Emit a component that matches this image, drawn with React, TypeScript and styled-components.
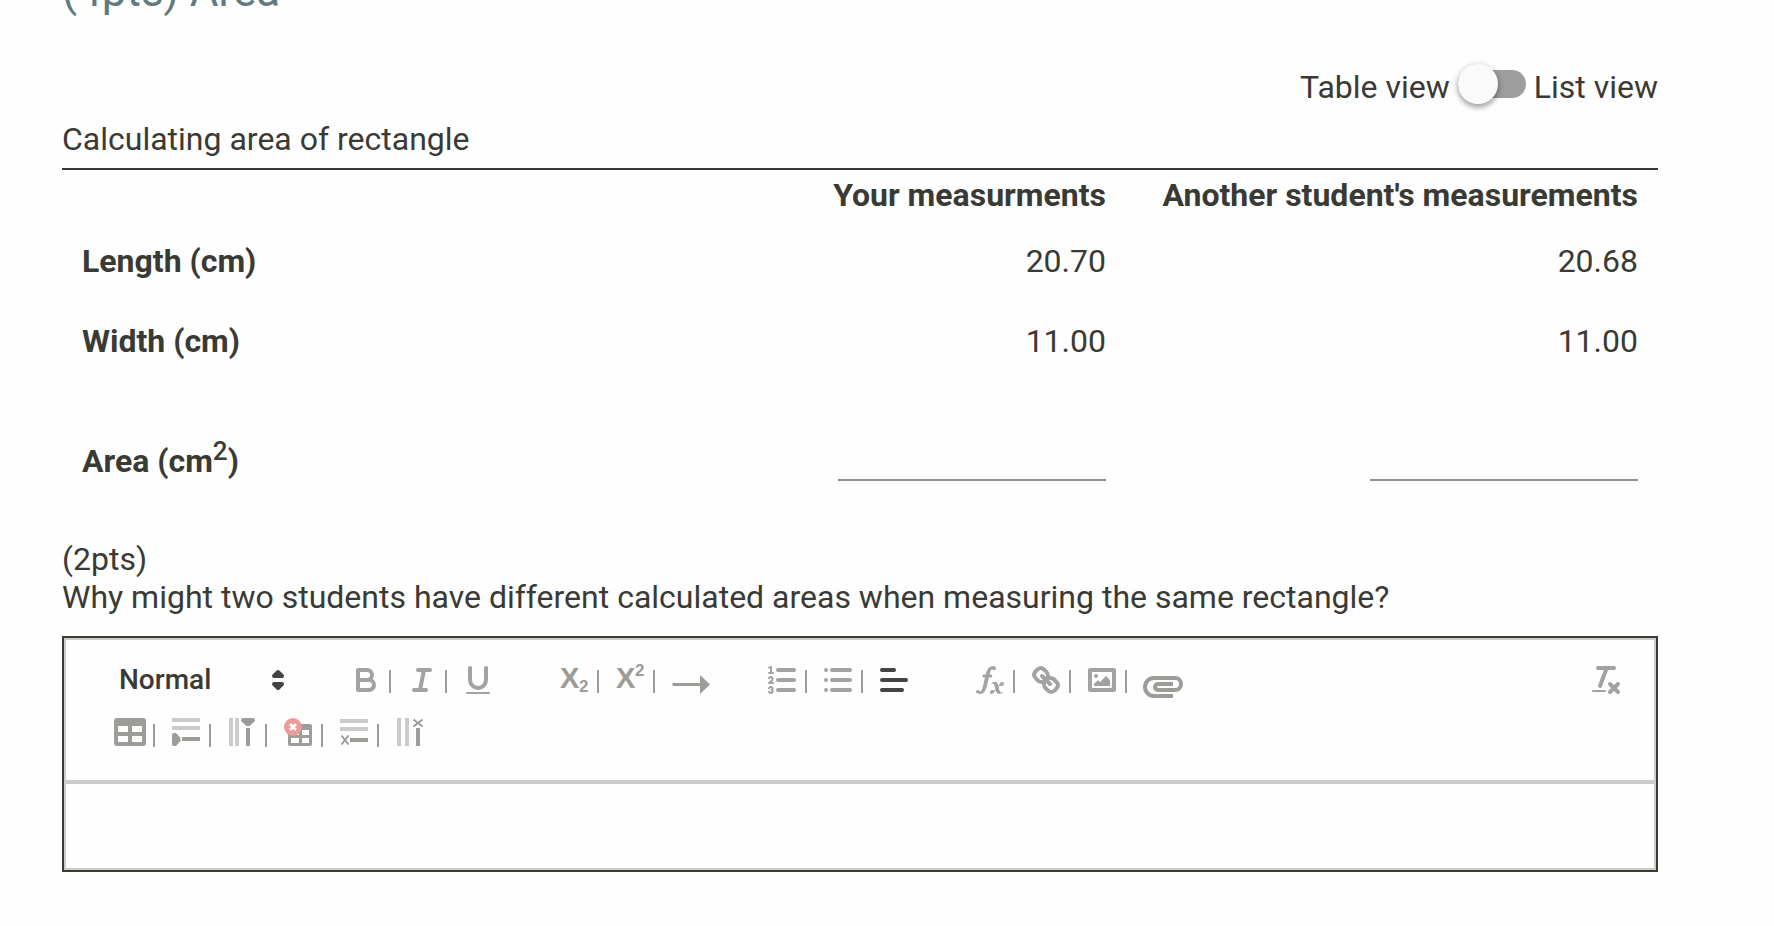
import React, { useState } from "react";
import styled, { createGlobalStyle } from "styled-components";

const ink = "#3a3a35";
const muted = "#9c9c99";
const pale = "#cbcbca";

const GlobalStyle = createGlobalStyle`
  *, *::before, *::after { box-sizing: border-box; }
  html { background: #fefefe; }
  body {
    margin: 0;
    overflow-x: hidden;
    color: ${ink};
    font-family: Roboto, "Liberation Sans", sans-serif;
    font-size: 32px;
    line-height: 38px;
  }
`;

const Page = styled.main`
  padding: 0 116px 40px 62px;
`;

const Heading = styled.h1`
  margin: -37px 0 0;
  color: #5f7b7d;
  font-size: 44px;
  font-weight: 400;
  line-height: 56px;
`;

const ViewSwitch = styled.label`
  display: flex;
  justify-content: flex-end;
  align-items: center;
  gap: 8px;
  margin-top: 49px;
`;

const Toggle = styled.input`
  appearance: none;
  display: flex;
  align-items: center;
  width: 68px;
  height: 28px;
  margin: 0 0 6px;
  border-radius: 14px;
  background: #9e9e9e;
  cursor: pointer;

  &::before {
    content: "";
    width: 40px;
    height: 40px;
    flex: none;
    border-radius: 50%;
    background: #fafafa;
    box-shadow: 0 2px 6px rgba(0, 0, 0, 0.2), 0 4px 4px rgba(0, 0, 0, 0.14), 0 2px 8px rgba(0, 0, 0, 0.12);
  }
  &:checked::before { margin-left: 28px; }
`;

const Measurements = styled.table`
  width: 100%;
  table-layout: fixed;
  border-collapse: collapse;

  caption {
    padding: 14px 0 10px;
    border-bottom: 2px solid ${ink};
    text-align: left;
  }
`;

const ColumnHead = styled.th`
  height: 51px;
  padding: 0 20px 2px;
  font-weight: 700;
  text-align: right;
  white-space: nowrap;
`;

const RowHead = styled.th`
  padding: 0 20px;
  font-weight: 700;
  text-align: left;

  sup {
    font-size: 26px;
    font-weight: 500;
    line-height: 0;
    vertical-align: 12px;
  }
`;

const Row = styled.tr`
  height: 80px;
`;

const AreaRow = styled.tr`
  height: 159px;
`;

const Cell = styled.td`
  padding: 0 20px;
  text-align: right;
`;

const AreaInput = styled.input`
  width: 268px;
  max-width: 100%;
  height: 38px;
  padding: 0;
  border: 0;
  border-bottom: 2px solid #949494;
  background: transparent;
  color: inherit;
  font: inherit;
  text-align: right;
  vertical-align: middle;
`;

const Question = styled.section`
  p { margin: 0; }
`;

const Editor = styled.div`
  margin-top: 20px;
  border: 2px solid ${ink};
`;

const Toolbar = styled.div`
  display: flex;
  flex-wrap: wrap;
  column-gap: 40px;
  row-gap: 6px;
  padding: 16px 20px 22px 36px;
  border: 2px solid ${pale};
`;

const Group = styled.div<{ $end?: boolean; $line?: boolean }>`
  display: flex;
  flex: ${(p) => (p.$line ? "1 0 100%" : "none")};
  margin-left: ${(p) => (p.$end ? "auto" : "0")};
`;

const Tool = styled.button<{ $divided?: boolean }>`
  position: relative;
  width: 56px;
  height: 48px;
  padding: 6px 10px;
  border: 0;
  background: none;
  cursor: pointer;

  svg {
    display: block;
    overflow: visible;
  }
  &::after {
    content: "";
    display: ${(p) => (p.$divided ? "block" : "none")};
    position: absolute;
    right: 3px;
    top: 14px;
    width: 2px;
    height: 23px;
    background: ${muted};
  }
`;

const Picker = styled.div`
  position: relative;
  width: 196px;
  height: 48px;

  svg {
    position: absolute;
    right: 2px;
    top: 6px;
    pointer-events: none;
  }
`;

const FormatSelect = styled.select`
  appearance: none;
  width: 100%;
  height: 100%;
  padding: 0 17px;
  border: 0;
  background: transparent;
  color: ${ink};
  font: 500 28px/48px Roboto, "Liberation Sans", sans-serif;
`;

const Answer = styled.textarea`
  display: block;
  width: 100%;
  height: 88px;
  padding: 24px 30px;
  border: 2px solid ${pale};
  background: transparent;
  color: inherit;
  font: inherit;
  resize: none;
  outline: none;
`;

/* 18-unit grid with round two-unit strokes */
const Glyph = ({ children, color = "#a2a2a1" }: { children: React.ReactNode; color?: string }) => (
  <svg width="36" height="36" viewBox="0 0 18 18" fill="none" stroke={color} strokeWidth="2" strokeLinecap="round" strokeLinejoin="round" aria-hidden="true">
    {children}
  </svg>
);

/* 36-unit grid with solid shapes */
const Solid = ({ children }: { children: React.ReactNode }) => (
  <svg width="36" height="36" viewBox="0 0 36 36" fill={muted} aria-hidden="true">
    {children}
  </svg>
);

const letter = { fontFamily: '"Liberation Sans", sans-serif', fontWeight: 700 };

const icons: Record<string, React.ReactNode> = {
  Bold: (
    <Glyph>
      <path d="M5,4H9.5A2.5,2.5,0,0,1,12,6.5v0A2.5,2.5,0,0,1,9.5,9H5V4Z" />
      <path d="M5,9h5.5A2.5,2.5,0,0,1,13,11.5v0A2.5,2.5,0,0,1,10.5,14H5V9Z" />
    </Glyph>
  ),
  Italic: (
    <Glyph>
      <path d="M7 4H13M5 14H11M8 14L10 4" />
    </Glyph>
  ),
  Underline: (
    <Glyph>
      <path d="M5,3V9a4.012,4.012,0,0,0,4,4H9a4.012,4.012,0,0,0,4-4V3" />
      <rect x="3" y="15" width="12" height="1" rx=".5" fill="#a2a2a1" stroke="none" />
    </Glyph>
  ),
  Subscript: (
    <Solid>
      <text x="4" y="26" fontSize="29" {...letter}>X</text>
      <text x="23" y="30" fontSize="17" {...letter}>2</text>
    </Solid>
  ),
  Superscript: (
    <Solid>
      <text x="4" y="26" fontSize="29" {...letter}>X</text>
      <text x="23" y="14" fontSize="17" {...letter}>2</text>
    </Solid>
  ),
  Arrow: (
    <Solid>
      <path d="M4.5 21H32V24H4.5Z M32 13L42 22.500L32 32Z" />
    </Solid>
  ),
  "Numbered list": (
    <Glyph>
      <path d="M7 4H15M7 9H15M7 14H15" />
      <path strokeWidth="1" d="M2.5 5.500H4.500M4.500,10.500h-2c0-.234,1.85-1.076,1.85-2.234A0.959,0.959,0,0,0,2.5,8.156M2.5,14.846a0.959,0.959,0,0,0,1.85-.109A0.7,0.7,0,0,0,3.75,14a0.688,0.688,0,0,0,.6-0.736,0.959,0.959,0,0,0-1.85-.109" />
      <path fill="#a2a2a1" stroke="none" d="M3.5,6A0.5,0.5,0,0,1,3,5.5V3.085l-0.276.138A0.5,0.5,0,0,1,2.053,3c-0.124-.247-0.023-0.324.224-0.447l1-.5A0.5,0.5,0,0,1,4,2.5v3A0.5,0.5,0,0,1,3.5,6Z" />
    </Glyph>
  ),
  "Bulleted list": (
    <Glyph>
      <path d="M6 4H15M6 9H15M6 14H15M3 4H3M3 9H3M3 14H3" />
    </Glyph>
  ),
  Align: (
    <Glyph color="#444442">
      <path d="M3 4H9M3 9H15M3 14H13" />
    </Glyph>
  ),
  Formula: (
    <Glyph>
      <g fill="#a2a2a1" stroke="none">
        <path d="M11.759,2.482a2.561,2.561,0,0,0-3.53.607A7.656,7.656,0,0,0,6.8,6.2C6.109,9.188,5.275,14.677,4.15,14.927a1.545,1.545,0,0,0-1.3-.933A0.922,0.922,0,0,0,2,15.036S1.954,16,4.119,16s3.091-2.691,3.7-5.553c0.177-.826.36-1.726,0.554-2.6L8.775,6.2c0.381-1.421.807-2.521,1.306-2.676a1.014,1.014,0,0,0,1.02.56A0.966,0.966,0,0,0,11.759,2.482Z" />
        <rect x="5.150" y="6.200" width="5" height="1.600" rx=".8" />
        <path d="M13.663,12.027a1.662,1.662,0,0,1,.266-0.276q0.193,0.069.456,0.138a2.1,2.1,0,0,0,.535.069,1.075,1.075,0,0,0,.767-0.3,1.044,1.044,0,0,0,.314-0.8,0.84,0.84,0,0,0-.238-0.619,0.8,0.8,0,0,0-.594-0.239,1.154,1.154,0,0,0-.781.3,4.607,4.607,0,0,0-.781,1q-0.091.15-.218,0.346l-0.246.38c-0.068-.288-0.137-0.582-0.212-0.885-0.459-1.847-2.494-.984-2.941-0.8-0.482.2-.353,0.647-0.094,0.529a0.869,0.869,0,0,1,1.281.585c0.217,0.751.377,1.436,0.527,2.038a5.688,5.688,0,0,1-.362.467,2.69,2.69,0,0,1-.264.271q-0.221-.08-0.471-0.147a2.029,2.029,0,0,0-.522-0.066,1.079,1.079,0,0,0-.768.3A1.058,1.058,0,0,0,9,15.131a0.82,0.82,0,0,0,.832.852,1.134,1.134,0,0,0,.787-0.3,5.11,5.11,0,0,0,.776-0.993q0.141-.219.215-0.34c0.046-.076.122-0.194,0.223-0.346a2.786,2.786,0,0,0,.918,1.726,2.582,2.582,0,0,0,2.376-.185c0.317-.181.212-0.565,0-0.494A0.807,0.807,0,0,1,14.176,15a5.159,5.159,0,0,1-.913-2.446l0,0Q13.487,12.24,13.663,12.027Z" />
      </g>
    </Glyph>
  ),
  Link: (
    <Glyph>
      <path d="M7 7L11 11" />
      <path d="M8.9,4.577a3.476,3.476,0,0,1,.36,4.679A3.476,3.476,0,0,1,4.577,8.9C3.185,7.5,2.035,6.4,4.217,4.217S7.5,3.185,8.9,4.577Z" />
      <path d="M13.423,9.1a3.476,3.476,0,0,0-4.679-.36,3.476,3.476,0,0,0,.36,4.679c1.392,1.392,2.5,2.542,4.679.36S14.815,10.5,13.423,9.1Z" />
    </Glyph>
  ),
  Image: (
    <Glyph>
      <rect x="3" y="4" width="12" height="10" />
      <g fill="#a2a2a1" stroke="none">
        <circle cx="6" cy="7" r="1" />
        <path d="M5 12V11L7 9L8 10L11 7L13 9V12Z" />
      </g>
    </Glyph>
  ),
  Attachment: (
    <Solid>
      <path fill="none" stroke={muted} strokeWidth="4" d="M33 34H14A9 9 0 0 1 14 16H35A6 6 0 0 1 35 28H18A3 3 0 0 1 18 22H33" />
    </Solid>
  ),
  "Clear formatting": (
    <Glyph>
      <path d="M5 3H13M6 12L9.350 3M11 11L15 15M15 11L11 15" />
      <rect x="2" y="14" width="7" height="1" rx=".5" fill="#a2a2a1" stroke="none" />
    </Glyph>
  ),
  "Insert table": (
    <Solid>
      <path fillRule="evenodd" d="M5 2H31Q34 2 34 5V27Q34 30 31 30H5Q2 30 2 27V5Q2 2 5 2ZM6 10V16H16V10ZM20 10V16H30V10ZM6 20V26H16V20ZM20 20V26H30V20Z" />
    </Solid>
  ),
  "Insert row": (
    <Solid>
      <path fill={pale} d="M4 2H32V6H4ZM4 10H32V14H4Z" />
      <path d="M14 21H32V25H14ZM4 19Q4 17 6 17H8L12.500 22V25L8 30H6Q4 30 4 28Z" />
    </Solid>
  ),
  "Insert column": (
    <Solid>
      <path fill={pale} d="M5 2H9V30H5ZM11 2H15V30H11Z" />
      <path d="M22 12H26V30H22ZM19 2H29Q31 2 31 4V5L25.500 10H22.500L17 5V4Q17 2 19 2Z" />
    </Solid>
  ),
  "Delete table": (
    <Solid>
      <path fillRule="evenodd" d="M10 8H30Q32 8 32 10V28Q32 30 30 30H10Q8 30 8 28V10Q8 8 10 8ZM11 14V19H19V14ZM22 14V19H29V14ZM11 22V27H19V22ZM22 22V27H29V22Z" />
      <circle cx="13" cy="11" r="9" fill="#e99c9a" />
      <path fill="none" stroke="#fff" strokeWidth="2.500" d="M10 8L16 14M16 8L10 14" />
    </Solid>
  ),
  "Delete row": (
    <Solid>
      <path fill={pale} d="M4 3H32V7H4ZM4 11H32V15H4Z" />
      <path d="M14 22H32V26H14Z" />
      <path fill="none" stroke={muted} strokeWidth="2" d="M5.500 19.500L12.500 28.500M12.500 19.500L5.500 28.500" />
    </Solid>
  ),
  "Delete column": (
    <Solid>
      <path fill={pale} d="M5 2H9V30H5ZM13 2H17V30H13Z" />
      <path d="M24 12H28V30H24Z" />
      <path fill="none" stroke={muted} strokeWidth="2" d="M21.500 3.500L30.500 10.500M30.500 3.500L21.500 10.500" />
    </Solid>
  ),
};

const groups = [
  ["Bold", "Italic", "Underline"],
  ["Subscript", "Superscript", "Arrow"],
  ["Numbered list", "Bulleted list", "Align"],
  ["Formula", "Link", "Image", "Attachment"],
  ["Clear formatting"],
  ["Insert table", "Insert row", "Insert column", "Delete table", "Delete row", "Delete column"],
];

const measurements = [
  { label: "Length (cm)", values: ["20.70", "20.68"] },
  { label: "Width (cm)", values: ["11.00", "11.00"] },
];

export default function App() {
  const [list, setList] = useState(false);
  return (
    <Page>
      <GlobalStyle />
      <Heading>(4pts) Area</Heading>
      <ViewSwitch>
        <span>Table view</span>
        <Toggle type="checkbox" role="switch" checked={list} onChange={(e) => setList(e.target.checked)} />
        <span>List view</span>
      </ViewSwitch>
      <Measurements>
        <caption>Calculating area of rectangle</caption>
        <thead>
          <tr>
            <ColumnHead as="td" />
            <ColumnHead scope="col">Your measurments</ColumnHead>
            <ColumnHead scope="col">Another student's measurements</ColumnHead>
          </tr>
        </thead>
        <tbody>
          {measurements.map((m) => (
            <Row key={m.label}>
              <RowHead scope="row">{m.label}</RowHead>
              {m.values.map((v, i) => (
                <Cell key={i}>{v}</Cell>
              ))}
            </Row>
          ))}
          <AreaRow>
            <RowHead scope="row">
              Area (cm<sup>2</sup>)
            </RowHead>
            <Cell><AreaInput aria-label="Area from your measurements" /></Cell>
            <Cell><AreaInput aria-label="Area from another student's measurements" /></Cell>
          </AreaRow>
        </tbody>
      </Measurements>
      <Question>
        <p>(2pts)</p>
        <p id="question">Why might two students have different calculated areas when measuring the same rectangle?</p>
        <Editor>
          <Toolbar role="toolbar" aria-label="Formatting">
            <Picker>
              <FormatSelect aria-label="Text style" defaultValue="Normal">
                <option>Normal</option>
                <option>Heading 1</option>
                <option>Heading 2</option>
              </FormatSelect>
              <Glyph color="#444442">
                <g fill="#444442">
                  <path d="M7 11L9 13L11 11ZM7 7L9 5L11 7Z" />
                </g>
              </Glyph>
            </Picker>
            {groups.map((names) => (
              <Group key={names[0]} $end={names.length === 1} $line={names.length > 4}>
                {names.map((name, i) => (
                  <Tool key={name} type="button" aria-label={name} $divided={i < names.length - 1}>
                    {icons[name]}
                  </Tool>
                ))}
              </Group>
            ))}
          </Toolbar>
          <Answer aria-labelledby="question" />
        </Editor>
      </Question>
    </Page>
  );
}
